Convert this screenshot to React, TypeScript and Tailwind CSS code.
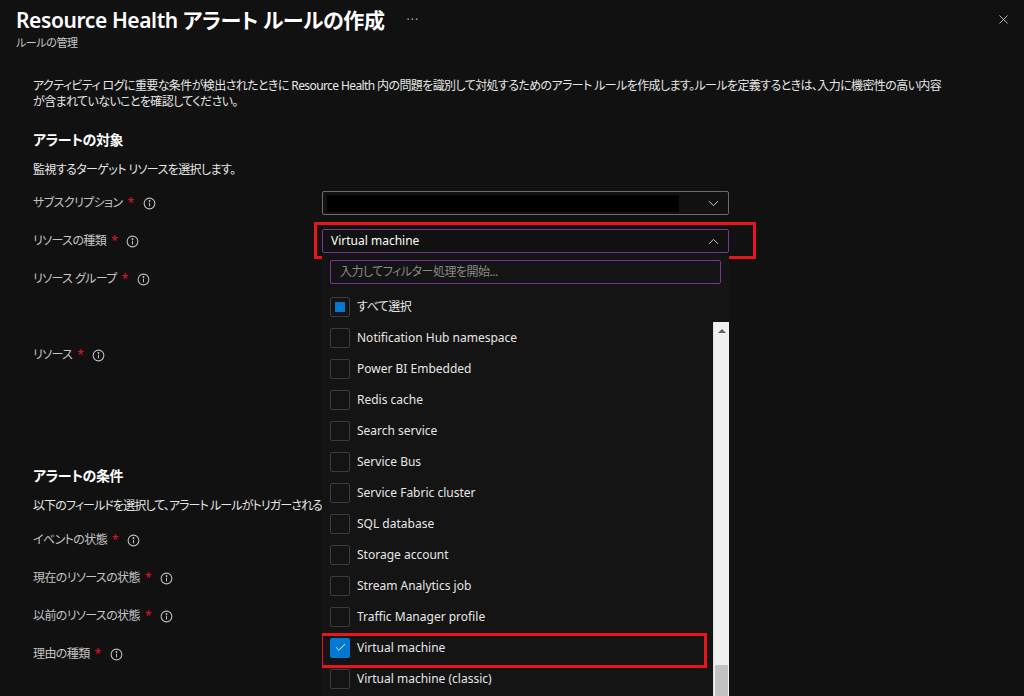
import { ChevronDown, ChevronUp, X, Check } from "lucide-react";

const resourceTypes = [
  "Notification Hub namespace",
  "Power BI Embedded",
  "Redis cache",
  "Search service",
  "Service Bus",
  "Service Fabric cluster",
  "SQL database",
  "Storage account",
  "Stream Analytics job",
  "Traffic Manager profile",
  "Virtual machine",
  "Virtual machine (classic)",
];

const InfoIcon = () => (
  <svg width="13" height="13" viewBox="0 0 16 16" fill="none" stroke="currentColor" strokeWidth="1.3" className="text-[#c0c0c0] shrink-0">
    <circle cx="8" cy="8" r="6.6" />
    <line x1="8" y1="7" x2="8" y2="11.6" />
    <circle cx="8" cy="4.9" r="0.5" fill="currentColor" />
  </svg>
);

function FieldLabel({ text }: { text: string }) {
  return (
    <div className="flex items-center gap-[9px] text-[12px] leading-[16px] tracking-[-0.6px] text-[#c4c4c4]">
      <span>
        {text}
        <span className="ml-[5px] text-[#e8141e]">*</span>
      </span>
      <InfoIcon />
    </div>
  );
}

function Checkbox({ state }: { state: "off" | "on" | "partial" }) {
  if (state === "on") {
    return (
      <div className="w-[20px] h-[20px] rounded-[2px] bg-[#0078d4] flex items-center justify-center shrink-0">
        <Check className="w-[13px] h-[13px] text-white" strokeWidth={1.6} />
      </div>
    );
  }
  return (
    <div className="w-[20px] h-[20px] rounded-[2px] border border-[#3d3d3d] flex items-center justify-center shrink-0">
      {state === "partial" && <div className="w-[10px] h-[10px] bg-[#0078d4]" />}
    </div>
  );
}

export default function App() {
  return (
    <div className="h-[696px] overflow-hidden bg-[#111111] text-[#e6e6e6] font-['Noto_Sans','Noto_Sans_CJK_JP',sans-serif] [font-feature-settings:'palt']">
      {/* Header */}
      <header className="flex items-start justify-between pl-4 pr-[13px] pt-[5px]">
        <div>
          <div className="flex items-center">
            <h1 className="text-[21px] font-semibold leading-[30px] tracking-[-0.4px] text-white">Resource Health アラート ルールの作成</h1>
            <span className="ml-[22px] text-[12px] text-[#aaaaaa] tracking-[1px]">···</span>
          </div>
          <p className="text-[11px] leading-[16px] tracking-[-0.4px] text-[#c8c8c8]">ルールの管理</p>
        </div>
        <X className="mt-[7px] w-[15px] h-[15px] text-[#cccccc]" strokeWidth={1.4} />
      </header>

      <main className="px-[33px]">
        <div className="mt-[27px] text-[12px] leading-[16px] tracking-[-0.6px] text-[#e6e6e6] whitespace-nowrap">
          <p>アクティビティ ログに重要な条件が検出されたときに Resource Health 内の問題を識別して対処するためのアラート ルールを作成します。ルールを定義するときは、入力に機密性の高い内容</p>
          <p>が含まれていないことを確認してください。</p>
        </div>

        <h2 className="mt-[20px] text-[14px] leading-[20px] font-bold tracking-[-0.4px] text-white">アラートの対象</h2>
        <p className="mt-[12px] text-[12px] leading-[16px] tracking-[-0.6px]">監視するターゲット リソースを選択します。</p>

        {/* Target form */}
        <div className="mt-[6px]">
          <div className="flex h-[38px] items-center">
            <div className="w-[289px]">
              <FieldLabel text="サブスクリプション" />
            </div>
            <div className="w-[407px] h-[24px] border border-[#6b6b6b] rounded-[2px] flex items-center pl-[4px] pr-[6px]">
              <div className="w-[352px] h-[17px] bg-black" />
              <ChevronDown className="ml-auto w-[17px] h-[17px] text-[#c8c8c8]" strokeWidth={1.4} />
            </div>
          </div>

          <div className="flex h-[38px] items-center">
            <div className="w-[289px]">
              <FieldLabel text="リソースの種類" />
            </div>
            <div className="relative w-[407px] h-[24px]">
              <div className="h-full border border-[#7b3596] rounded-[2px] flex items-center pl-[8px] pr-[6px]">
                <span className="text-[12px] text-white">Virtual machine</span>
                <ChevronUp className="ml-auto w-[17px] h-[17px] text-[#c8c8c8]" strokeWidth={1.4} />
              </div>
              <div className="absolute -left-[8px] -right-[27px] -top-[7px] -bottom-[6px] border-[3px] border-[#e8141e] pointer-events-none" />

              {/* Dropdown list */}
              <div className="absolute left-0 top-full z-10 w-[407px] h-[443px] overflow-hidden bg-[#141414]">
                <div className="mx-[8px] mt-[7px] h-[24px] border border-[#7b3596] rounded-[2px] flex items-center px-[9px] text-[12px] tracking-[-0.5px] text-[#8a8a8a]">
                  入力してフィルター処理を開始...
                </div>
                <div className="mt-[7px] h-[31px] flex items-center gap-[7px] pl-[8px] text-[12px] tracking-[-0.5px] text-[#e6e6e6]">
                  <Checkbox state="partial" />
                  すべて選択
                </div>
                <div className="flex h-[374px]">
                  <div className="flex-1 overflow-hidden">
                    {resourceTypes.map((name) => (
                      <div key={name} className="relative h-[31px] flex items-center gap-[7px] pl-[8px] text-[12px] text-[#e6e6e6]">
                        <Checkbox state={name === "Virtual machine" ? "on" : "off"} />
                        {name}
                        {name === "Virtual machine" && (
                          <div className="absolute -left-[2px] right-[6px] top-[1px] h-[35px] border-[3px] border-[#e8141e]" />
                        )}
                      </div>
                    ))}
                  </div>
                  <div className="w-[16px] bg-[#f0f0f0] border-l border-[#e0e0e0] flex flex-col">
                    <div className="h-[17px] flex items-center justify-center">
                      <div className="w-0 h-0 border-l-[4px] border-r-[4px] border-b-[4px] border-l-transparent border-r-transparent border-b-[#606060]" />
                    </div>
                    <div className="flex-1" />
                    <div className="h-[31px] mx-[1px] bg-[#c2c2c2]" />
                  </div>
                </div>
              </div>
            </div>
          </div>

          <div className="h-[76px]">
            <div className="flex h-[38px] items-center">
              <FieldLabel text="リソース グループ" />
            </div>
          </div>

          <div className="flex h-[38px] items-center">
            <FieldLabel text="リソース" />
          </div>
        </div>

        <h2 className="mt-[92px] text-[14px] leading-[20px] font-bold tracking-[-0.4px] text-white">アラートの条件</h2>
        <p className="mt-[12px] w-[289px] overflow-hidden text-[12px] leading-[16px] tracking-[-0.9px] whitespace-nowrap">
          以下のフィールドを選択して、アラート ルールがトリガーされるタイミングを定義します。
        </p>

        <div className="mt-[7px]">
          {["イベントの状態", "現在のリソースの状態", "以前のリソースの状態", "理由の種類"].map((t) => (
            <div key={t} className="flex h-[38px] items-center">
              <FieldLabel text={t} />
            </div>
          ))}
        </div>
      </main>
    </div>
  );
}
